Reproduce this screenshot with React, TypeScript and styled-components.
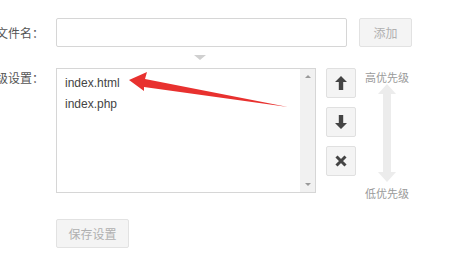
import React from "react";
import styled, { createGlobalStyle } from "styled-components";

const GlobalStyle = createGlobalStyle`
  html, body {
    margin: 0;
    padding: 0;
    background: #fff;
    font-family: "Liberation Sans", "Noto Sans CJK SC", sans-serif;
  }
`;

const Page = styled.div`
  position: relative;
  width: 474px;
  height: 268px;
  overflow: hidden;
  padding-top: 18px;
  box-sizing: border-box;
`;

const Row = styled.div<{ $top?: number; $align?: string }>`
  display: flex;
  align-items: ${(p) => p.$align || "center"};
  margin-top: ${(p) => p.$top || 0}px;
`;

const Label = styled.div<{ $pad?: number }>`
  width: 44px;
  margin-right: 12px;
  flex-shrink: 0;
  display: flex;
  justify-content: flex-end;
  white-space: nowrap;
  font-size: 12px;
  color: #555;
  padding-top: ${(p) => p.$pad || 0}px;
  align-self: ${(p) => (p.$pad ? "flex-start" : "center")};
`;

const TextInput = styled.input`
  width: 291px;
  height: 29px;
  box-sizing: border-box;
  border: 1px solid #d6d6d6;
  border-radius: 2px;
  padding: 0 8px;
  font-size: 12px;
  outline: none;
`;

const GreyButton = styled.button<{ $w: number }>`
  width: ${(p) => p.$w}px;
  height: 29px;
  box-sizing: border-box;
  border: 1px solid #e2e2e2;
  border-radius: 2px;
  background: #f4f4f4;
  color: #b0b0b0;
  font-size: 12px;
  font-family: "Noto Sans CJK SC", sans-serif;
  padding: 0;
`;

const AddButton = styled(GreyButton)`
  margin-left: 12px;
`;

const Caret = styled.div`
  margin: 8px 0 0 194px;
  width: 0;
  height: 0;
  border-left: 6px solid transparent;
  border-right: 6px solid transparent;
  border-top: 5px solid #d0d0d0;
`;

const ListBox = styled.div`
  width: 260px;
  height: 125px;
  box-sizing: border-box;
  border: 1px solid #d6d6d6;
  display: flex;
`;

const Items = styled.ul`
  flex: 1;
  list-style: none;
  margin: 0;
  padding: 6px 0 0 8px;
`;

const Item = styled.li`
  font-size: 12px;
  color: #444;
  height: 21px;
  line-height: 16px;
`;

const ScrollTrack = styled.div`
  width: 15px;
  background: #f1f1f1;
  display: flex;
  flex-direction: column;
  justify-content: space-between;
  align-items: center;
  padding: 6px 0;
`;

const TrackArrow = styled.div<{ $down?: boolean }>`
  width: 0;
  height: 0;
  border-left: 3px solid transparent;
  border-right: 3px solid transparent;
  ${(p) =>
    p.$down ? "border-top: 3px solid #999;" : "border-bottom: 3px solid #999;"}
`;

const ActionColumn = styled.div`
  display: flex;
  flex-direction: column;
  gap: 9px;
  margin-left: 10px;
`;

const IconButton = styled.button`
  width: 30px;
  height: 30px;
  box-sizing: border-box;
  border: 1px solid #e0e0e0;
  border-radius: 2px;
  background: #f4f4f4;
  display: flex;
  align-items: center;
  justify-content: center;
  padding: 0;
`;

const Priority = styled.div`
  margin-left: 9px;
  display: flex;
  flex-direction: column;
  align-items: center;
  padding-top: 2px;
  width: 44px;
`;

const PriorityText = styled.div<{ $top?: number }>`
  font-size: 11px;
  color: #9a9a9a;
  font-family: "Noto Sans CJK SC", sans-serif;
  line-height: 14px;
  margin-top: ${(p) => p.$top || 0}px;
`;

const Overlay = styled.svg`
  position: absolute;
  left: 0;
  top: 0;
  pointer-events: none;
`;

const UpIcon = () => (
  <svg width="12" height="14" viewBox="0 0 12 14">
    <path d="M6 0 L12 6 L8.2 6 L8.2 14 L3.8 14 L3.8 6 L0 6 Z" fill="#444" />
  </svg>
);

const DownIcon = () => (
  <svg width="12" height="14" viewBox="0 0 12 14">
    <path d="M6 14 L12 8 L8.2 8 L8.2 0 L3.8 0 L3.8 8 L0 8 Z" fill="#444" />
  </svg>
);

const CloseIcon = () => (
  <svg width="12" height="12" viewBox="0 0 12 12">
    <path d="M1.5 1.5 L10.5 10.5 M10.5 1.5 L1.5 10.5" stroke="#444" strokeWidth="3" />
  </svg>
);

const PriorityArrow = () => (
  <svg width="20" height="98" viewBox="0 0 20 98">
    <path
      d="M10 0 L19 10 L14 10 L14 88 L19 88 L10 98 L1 88 L6 88 L6 10 L1 10 Z"
      fill="#ececec"
    />
  </svg>
);

export default function App() {
  const files = ["index.html", "index.php"];
  return (
    <Page>
      <GlobalStyle />
      <Row>
        <Label>默认文件名：</Label>
        <TextInput />
        <AddButton $w={53}>添加</AddButton>
      </Row>
      <Caret />
      <Row $top={8} $align="flex-start">
        <Label $pad={1}>优先级设置：</Label>
        <ListBox>
          <Items>
            {files.map((f) => (
              <Item key={f}>{f}</Item>
            ))}
          </Items>
          <ScrollTrack>
            <TrackArrow />
            <TrackArrow $down />
          </ScrollTrack>
        </ListBox>
        <ActionColumn>
          <IconButton>
            <UpIcon />
          </IconButton>
          <IconButton>
            <DownIcon />
          </IconButton>
          <IconButton>
            <CloseIcon />
          </IconButton>
        </ActionColumn>
        <Priority>
          <PriorityText>高优先级</PriorityText>
          <PriorityArrow />
          <PriorityText $top={4}>低优先级</PriorityText>
        </Priority>
      </Row>
      <Row $top={19}>
        <Label />
        <GreyButton $w={73}>保存设置</GreyButton>
      </Row>
      <Overlay width="474" height="268">
        <polygon
          points="129,80 147,72 145,79 288,107 144,87 144,91"
          fill="#e8312f"
        />
      </Overlay>
    </Page>
  );
}
